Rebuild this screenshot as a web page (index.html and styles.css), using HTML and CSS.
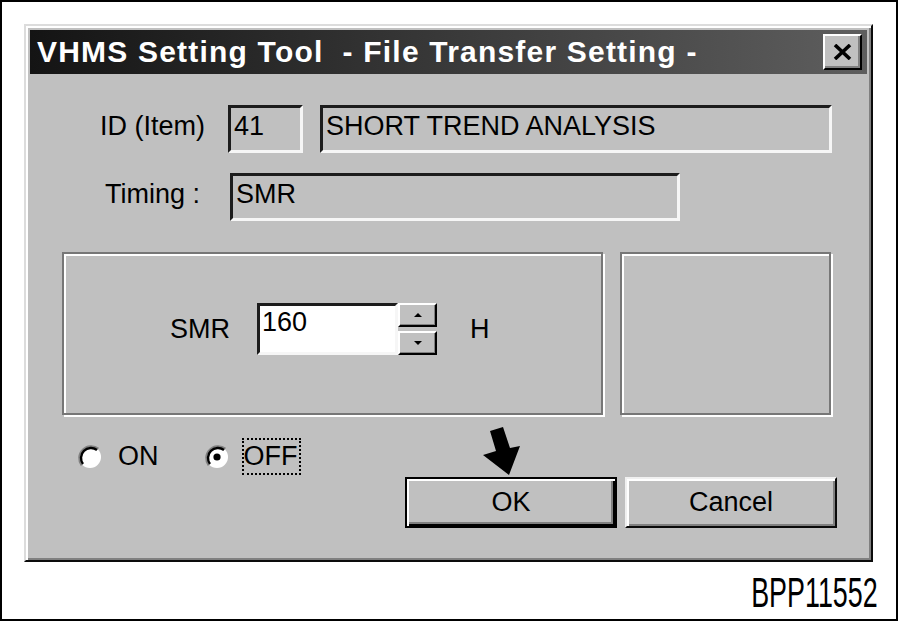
FILE: index.html
```html
<!DOCTYPE html>
<html>
<head>
<meta charset="utf-8">
<link rel="stylesheet" href="styles.css">
</head>
<body>
<div class="sheet">
  <div class="dialog">
    <div class="titlebar">
      <span class="title">VHMS Setting Tool  - File Transfer Setting -</span>
      <div class="close"><svg width="19" height="16" viewBox="0 0 19 16"><path d="M2 1 L17 15 M17 1 L2 15" stroke="#000" stroke-width="3.6" fill="none"/></svg></div>
    </div>
    <div class="body">
      <div class="row row-id">
        <span class="label">ID (Item)</span>
        <div class="field f-id">41</div>
        <div class="field f-name">SHORT TREND ANALYSIS</div>
      </div>
      <div class="row row-timing">
        <span class="label">Timing :</span>
        <div class="field f-timing">SMR</div>
      </div>
      <div class="groups">
        <div class="group g-main">
          <span class="smr-label">SMR</span>
          <div class="spin">
            <div class="spin-edit">160</div>
            <div class="spin-btns">
              <div class="spin-btn"><span class="tri-up"></span></div>
              <div class="spin-btn"><span class="tri-down"></span></div>
            </div>
          </div>
          <span class="unit">H</span>
        </div>
        <div class="group g-side"></div>
      </div>
      <div class="radios">
        <div class="radio radio-on">
          <svg viewBox="0 0 26 26"><circle cx="13" cy="13" r="11" fill="#fff"/><path d="M4.6 21.4A12 12 0 0 1 21.4 4.6" fill="none" stroke="#808080" stroke-width="2"/><path d="M6 20A10 10 0 0 1 20 6" fill="none" stroke="#000" stroke-width="2.4"/></svg>
          <span class="rlabel">ON</span>
        </div>
        <div class="radio radio-off">
          <svg viewBox="0 0 26 26"><circle cx="13" cy="13" r="11" fill="#fff"/><path d="M4.6 21.4A12 12 0 0 1 21.4 4.6" fill="none" stroke="#808080" stroke-width="2"/><path d="M6 20A10 10 0 0 1 20 6" fill="none" stroke="#000" stroke-width="2.4"/><circle cx="13" cy="13" r="3.6" fill="#000"/></svg>
          <span class="rlabel">OFF</span>
        </div>
      </div>
      <div class="buttons">
        <div class="btn btn-ok">OK</div>
        <div class="btn btn-cancel">Cancel</div>
      </div>
    </div>
  </div>
  <div class="caption">BPP11552</div>
  <svg class="pointer" viewBox="480 424 44 54"><polygon points="490,431 503,427 510,448 520,446 509,475 483,455 496,451" fill="#000"/></svg>
</div>
</body>
</html>
```
FILE: styles.css
```css
html, body {
  margin: 0;
  padding: 0;
  background: #fff;
}
body {
  width: 898px;
  height: 621px;
  overflow: hidden;
  font-family: "Liberation Sans", Arial, sans-serif;
  color: #000;
}
.sheet {
  position: relative;
  width: 898px;
  height: 621px;
  box-sizing: border-box;
  border: 2px solid #000;
  padding: 22px 18px 0 22px;
}
.dialog {
  width: 849px;
  height: 538px;
  box-sizing: border-box;
  border: 2px solid;
  border-color: #dcdcdc #0c0c0c #0c0c0c #dcdcdc;
  box-shadow: inset 2px 2px 0 #fff, inset -2px -2px 0 #808080;
  padding: 4px;
  background: #c0c0c0;
  display: flex;
  flex-direction: column;
}
.titlebar {
  height: 44px;
  flex: none;
  display: flex;
  align-items: center;
  justify-content: space-between;
  padding: 0 5px 0 7px;
  background: linear-gradient(to right, #141414, #5e5e5e);
}
.title {
  color: #fff;
  font-weight: bold;
  font-size: 30px;
  letter-spacing: 1.2px;
  white-space: pre;
}
.close {
  width: 39px;
  height: 36px;
  box-sizing: border-box;
  border: 2px solid;
  border-color: #fff #000 #000 #fff;
  box-shadow: inset -2px -2px 0 #808080;
  background: #c0c0c0;
  display: flex;
  align-items: center;
  justify-content: center;
}
.body {
  flex: 1;
  font-size: 27px;
}
.row {
  display: flex;
  align-items: flex-start;
}
.row-id {
  margin: 31px 0 0 70px;
}
.row-id .label {
  width: 128px;
}
.row-timing {
  margin: 20px 0 0 75px;
}
.row-timing .label {
  width: 125px;
}
.label {
  margin-top: 3px;
  line-height: 36px;
  white-space: pre;
}
.field {
  height: 48px;
  box-sizing: border-box;
  border: 3px solid;
  border-color: #1c1c1c #f6f6f6 #f6f6f6 #1c1c1c;
  line-height: 36px;
  padding-left: 3px;
  white-space: nowrap;
  overflow: hidden;
}
.f-id {
  width: 75px;
}
.f-name {
  width: 512px;
  margin-left: 17px;
}
.f-timing {
  width: 450px;
}
.groups {
  display: flex;
  margin: 31px 0 0 32px;
}
.group {
  height: 163px;
  box-sizing: border-box;
  border: 2px solid #777;
  box-shadow: inset 2px 2px 0 #fff, 2px 2px 0 #fff;
}
.g-main {
  width: 541px;
  display: flex;
  align-items: center;
  padding-bottom: 9px;
}
.g-side {
  width: 211px;
  margin-left: 17px;
}
.smr-label {
  margin-left: 106px;
  width: 87px;
}
.spin {
  display: flex;
}
.spin-edit {
  width: 141px;
  height: 52px;
  box-sizing: border-box;
  border: 3px solid;
  border-color: #1c1c1c #f6f6f6 #f6f6f6 #1c1c1c;
  background: #fff;
  line-height: 32px;
  padding-left: 2px;
}
.spin-btns {
  width: 39px;
  height: 52px;
  display: flex;
  flex-direction: column;
  justify-content: space-between;
}
.spin-btn {
  height: 24px;
  box-sizing: border-box;
  border: 2px solid;
  border-color: #fff #000 #000 #fff;
  box-shadow: inset -1px -1px 0 #808080;
  background: #c0c0c0;
  display: flex;
  align-items: center;
  justify-content: center;
}
.tri-up {
  width: 0;
  height: 0;
  border-left: 4px solid transparent;
  border-right: 4px solid transparent;
  border-bottom: 4px solid #000;
}
.tri-down {
  width: 0;
  height: 0;
  border-left: 4px solid transparent;
  border-right: 4px solid transparent;
  border-top: 4px solid #000;
}
.unit {
  margin-left: 33px;
}
.radios {
  display: flex;
  align-items: center;
  height: 37px;
  margin: 23px 0 0 47px;
}
.radio {
  display: flex;
  align-items: center;
}
.radio svg {
  width: 26px;
  height: 26px;
  flex: none;
}
.radio-on .rlabel {
  margin-left: 15px;
}
.radio-off {
  margin-left: 45px;
}
.radio-off .rlabel {
  margin-left: 12px;
  border: 2px dotted #000;
  line-height: 33px;
  padding: 0 1px 0 0;
}
.buttons {
  display: flex;
  justify-content: flex-end;
  gap: 8px;
  margin-top: 2px;
  padding-right: 30px;
}
.btn {
  width: 212px;
  height: 51px;
  box-sizing: border-box;
  display: flex;
  align-items: center;
  justify-content: center;
}
.btn-ok {
  border: 2px solid #000;
  box-shadow: inset 2px 2px 0 #fff, inset -2px -2px 0 #000, inset -4px -4px 0 #808080;
}
.btn-cancel {
  border: 2px solid;
  border-color: #f0f0f0 #0a0a0a #0a0a0a #f0f0f0;
  box-shadow: inset 2px 2px 0 #fff, inset -2px -2px 0 #808080;
}
.caption {
  width: max-content;
  margin: 10px 0 0 auto;
  font-size: 42px;
  line-height: 42px;
  transform: scaleX(0.64);
  transform-origin: right center;
}
.pointer {
  position: absolute;
  left: 478px;
  top: 422px;
  width: 44px;
  height: 54px;
}
```
